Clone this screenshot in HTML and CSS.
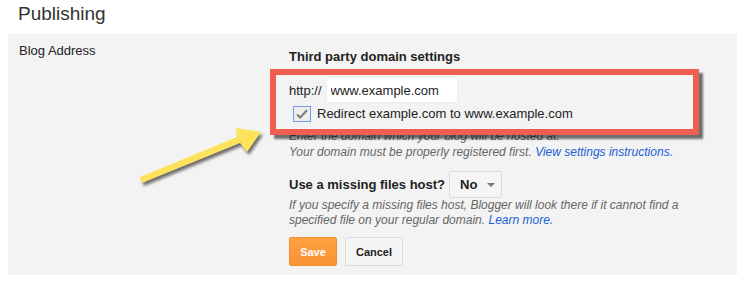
FILE: index.html
```html
<!DOCTYPE html>
<html lang="en">
<head>
  <meta charset="UTF-8" />
  <meta name="viewport" content="width=device-width, initial-scale=1.0" />
  <title>Publishing</title>
  <link rel="stylesheet" href="styles.css">
</head>
<body>
  <h1 class="page-title">Publishing</h1>

  <div class="panel">
    <div class="field-label">Blog Address</div>

    <div class="settings">
      <h3 class="section-title">Third party domain settings</h3>

      <div class="domain-row">
        <span>http://</span>
        <input class="domain-input" type="text" value="www.example.com">
      </div>

      <label class="redirect-row">
        <span class="checkbox">
          <svg width="12" height="10" viewBox="0 0 12 10"><path d="M1 5.5 L4.2 8.5 L11 1.2" fill="none" stroke="#7b7b7b" stroke-width="2"/></svg>
        </span>
        Redirect example.com to www.example.com
      </label>

      <p class="help">Enter the domain which your blog will be hosted at.<br>Your domain must be properly registered first. <a href="#">View settings instructions.</a></p>

      <div class="host-row">
        <span class="host-label">Use a missing files host?</span>
        <button class="select" type="button">No <span class="caret"></span></button>
      </div>

      <p class="help host-help">If you specify a missing files host, Blogger will look there if it cannot find a specified file on your regular domain. <a href="#">Learn more.</a></p>

      <div class="actions">
        <button class="btn btn-save" type="button">Save</button>
        <button class="btn btn-cancel" type="button">Cancel</button>
      </div>
    </div>

    <!-- annotation overlays -->
    <div class="highlight"></div>
    <svg class="arrow" width="140" height="70" viewBox="0 0 140 70">
      <polygon points="10,57 107,17 106,8 131,12 117,32 110,23 12,63" fill="#fde35c"/>
    </svg>
  </div>
</body>
</html>
```

FILE: styles.css
```css
* {
  box-sizing: border-box;
}

body {
  margin: 0;
  font-family: "Liberation Sans", Arial, sans-serif;
  font-size: 13px;
  color: #222;
  background: #fff;
}

.page-title {
  margin: 0;
  padding: 3px 0 0 18px;
  font-size: 19px;
  font-weight: normal;
  line-height: 22px;
  color: #333;
}

.panel {
  position: relative;
  margin: 9px 3px 0 8px;
  padding: 9px 0 9px 11px;
  background: #f3f3f3;
  display: grid;
  grid-template-columns: 270px 1fr;
}

.field-label {
  line-height: 16px;
}

.settings {
  width: 415px;
}

.section-title {
  margin: 6px 0 0;
  font-size: 13px;
  line-height: 16px;
  color: #222;
}

.domain-row {
  margin-top: 12px;
  display: flex;
  align-items: center;
  gap: 4px;
}

.domain-input {
  width: 132px;
  height: 26px;
  padding: 0 4px;
  border: 1px solid #ececec;
  background: #fff;
  font-family: "Liberation Sans", Arial, sans-serif;
  font-size: 13px;
  color: #222;
  outline: none;
}

.redirect-row {
  margin: 3px 0 0 4px;
  height: 16px;
  display: flex;
  align-items: center;
  gap: 6px;
  line-height: 16px;
}

.checkbox {
  width: 18px;
  height: 16px;
  border: 1px solid #6f9ce9;
  background: #eeeeee;
  display: flex;
  align-items: center;
  justify-content: center;
}

.help {
  margin: 6px 0 0;
  font-size: 12px;
  font-style: italic;
  line-height: 16px;
  color: #666;
}

.help a {
  color: #1a5fd6;
  text-decoration: none;
}

.host-row {
  margin-top: 11px;
  display: flex;
  align-items: center;
  gap: 4px;
}

.host-label {
  font-weight: bold;
}

.select {
  width: 53px;
  height: 27px;
  padding: 0 0 0 10px;
  display: flex;
  align-items: center;
  gap: 10px;
  border: 1px solid #dcdcdc;
  border-radius: 2px;
  background: #f5f5f5;
  font-family: "Liberation Sans", Arial, sans-serif;
  font-size: 13px;
  font-weight: bold;
  color: #222;
}

.caret {
  width: 0;
  height: 0;
  border-left: 4px solid transparent;
  border-right: 4px solid transparent;
  border-top: 4px solid #777;
}

.host-help {
  margin: 0;
  line-height: 15px;
}

.actions {
  margin-top: 9px;
  display: flex;
  gap: 8px;
}

.btn {
  height: 29px;
  padding: 0;
  border-radius: 2px;
  font-family: "Liberation Sans", Arial, sans-serif;
  font-size: 11px;
  font-weight: bold;
}

.btn-save {
  width: 48px;
  border: 1px solid #f3912f;
  background: linear-gradient(#ffa142, #fb9334);
  color: #fff;
}

.btn-cancel {
  width: 58px;
  border: 1px solid #dcdcdc;
  background: #f5f5f5;
  color: #222;
}

.highlight {
  position: absolute;
  left: 262px;
  top: 35px;
  width: 429px;
  height: 66px;
  border: 6px solid #ee5f52;
  box-shadow: 4px 4px 2px rgba(0, 0, 0, 0.55);
}

.arrow {
  position: absolute;
  left: 122px;
  top: 86px;
  filter: drop-shadow(2px 3px 1.5px rgba(0, 0, 0, 0.55));
}
```
